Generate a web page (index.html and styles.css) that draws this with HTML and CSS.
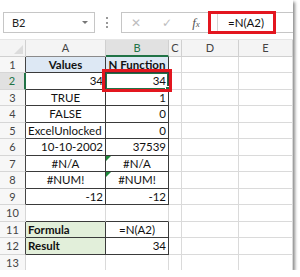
FILE: index.html
```html
<!DOCTYPE html>
<html lang="en">
<head>
  <meta charset="UTF-8">
  <title>N Function</title>
  <link rel="stylesheet" href="styles.css">
</head>
<body>
  <div class="window">
    <div class="fbar">
      <div class="namebox"><span>B2</span><span class="caret"></span></div>
      <div class="dots"></div>
      <div class="fbox">
        <span class="btn x">&#x2715;</span>
        <span class="btn ok">&#x2713;</span>
        <span class="fx"><i>f</i><small>x</small></span>
        <div class="mark"><span>=N(A2)</span></div>
      </div>
    </div>

    <div class="sheet">
      <div class="c corner"></div>
      <div class="c ch ch-t">A</div>
      <div class="c ch sel-col">B</div>
      <div class="c ch">C</div>
      <div class="c ch">D</div>
      <div class="c ch">E</div>

      <div class="c rh rh-t">1</div>
      <div class="c t head center">Values</div>
      <div class="c t head center">N Function</div>
      <div class="c"></div><div class="c"></div><div class="c"></div>

      <div class="c rh sel-row">2</div>
      <div class="c t right">34</div>
      <div class="c t right active">34</div>
      <div class="c"></div><div class="c"></div><div class="c"></div>

      <div class="c rh rh-t">3</div>
      <div class="c t center">TRUE</div>
      <div class="c t right">1</div>
      <div class="c"></div><div class="c"></div><div class="c"></div>

      <div class="c rh rh-t">4</div>
      <div class="c t center">FALSE</div>
      <div class="c t right">0</div>
      <div class="c"></div><div class="c"></div><div class="c"></div>

      <div class="c rh rh-t">5</div>
      <div class="c t">ExcelUnlocked</div>
      <div class="c t right">0</div>
      <div class="c"></div><div class="c"></div><div class="c"></div>

      <div class="c rh rh-t">6</div>
      <div class="c t right">10-10-2002</div>
      <div class="c t right">37539</div>
      <div class="c"></div><div class="c"></div><div class="c"></div>

      <div class="c rh rh-t">7</div>
      <div class="c t center">#N/A</div>
      <div class="c t center err">#N/A</div>
      <div class="c"></div><div class="c"></div><div class="c"></div>

      <div class="c rh rh-t">8</div>
      <div class="c t center">#NUM!</div>
      <div class="c t center err">#NUM!</div>
      <div class="c"></div><div class="c"></div><div class="c"></div>

      <div class="c rh rh-t">9</div>
      <div class="c t right">-12</div>
      <div class="c t right">-12</div>
      <div class="c"></div><div class="c"></div><div class="c"></div>

      <div class="c rh">10</div>
      <div class="c tb"></div>
      <div class="c tb"></div>
      <div class="c"></div><div class="c"></div><div class="c"></div>

      <div class="c rh rh-t">11</div>
      <div class="c t label">Formula</div>
      <div class="c t center">=N(A2)</div>
      <div class="c"></div><div class="c"></div><div class="c"></div>

      <div class="c rh rh-t">12</div>
      <div class="c t label">Result</div>
      <div class="c t right">34</div>
      <div class="c"></div><div class="c"></div><div class="c"></div>

      <div class="c rh last">13</div>
      <div class="c last"></div><div class="c last"></div><div class="c last"></div><div class="c last"></div><div class="c last"></div>
    </div>
  </div>
</body>
</html>
```

FILE: styles.css
```css
body {
  margin: 0;
  background: #fff;
  font-family: Lato, "Open Sans", sans-serif;
}

.window {
  width: 293px;
  height: 270px;
  background: #fff;
  box-shadow: 2px 2px 3px rgba(0, 0, 0, 0.45);
}

/* formula bar */
.fbar {
  height: 40px;
  box-sizing: border-box;
  padding-top: 12px;
  display: flex;
  align-items: flex-start;
  border-bottom: 1px solid #e6e6e6;
}

.namebox {
  margin-left: 3px;
  width: 92px;
  height: 21px;
  box-sizing: border-box;
  border: 1px solid #c6c6c6;
  display: flex;
  align-items: center;
  justify-content: space-between;
  padding: 0 6px 0 8px;
  font-size: 11px;
  color: #222;
}

.caret {
  width: 0;
  height: 0;
  border-left: 3px solid transparent;
  border-right: 3px solid transparent;
  border-top: 3px solid #777;
}

.dots {
  width: 0;
  height: 11px;
  margin: 5px 13px 0 11px;
  border-left: 2px dotted #999;
}

.fbox {
  flex: 1;
  height: 21px;
  box-sizing: border-box;
  border: 1px solid #c6c6c6;
  border-right: none;
  display: flex;
  align-items: center;
}

.btn {
  text-align: center;
  color: #bdbdbd;
  font-family: "DejaVu Sans", sans-serif;
  font-size: 12px;
}

.x { width: 28px; }
.ok { width: 34px; }

.fx {
  width: 24px;
  text-align: center;
  color: #555;
  font-family: "Liberation Serif", serif;
  font-size: 13px;
}

.fx small {
  font-size: 9px;
  font-style: italic;
}

.mark {
  height: 23px;
  width: 68px;
  margin: -1px 0;
  box-sizing: border-box;
  border: 3px solid #e3161f;
  padding-left: 6px;
  display: flex;
  align-items: stretch;
}

.mark span {
  border-left: 1px solid #d4d4d4;
  padding-left: 10px;
  font-size: 11.5px;
  line-height: 17px;
  color: #111;
}

/* sheet grid */
.sheet {
  display: grid;
  grid-template-columns: 26px 80px 63px 13px 57px 54px;
  grid-auto-rows: 16.5px;
  font-size: 11.5px;
  color: #111;
}

.c {
  box-sizing: border-box;
  height: 16.5px;
  border-right: 1px solid #dadada;
  border-bottom: 1px solid #dadada;
  padding: 0 2px;
  display: flex;
  align-items: center;
  white-space: nowrap;
  overflow: hidden;
}

.c.last { border-bottom: none; }

.corner {
  background: #f4f4f4;
  position: relative;
  border-color: #d0d0d0;
}

.corner::after {
  content: "";
  position: absolute;
  right: 2px;
  bottom: 2px;
  border-left: 9px solid transparent;
  border-bottom: 9px solid #dcdcdc;
}

.ch {
  background: #f4f4f4;
  color: #444;
  justify-content: center;
  font-size: 11px;
  border-color: #d0d0d0;
}

.ch-t { border-bottom-color: #8a8a8a; }

.sel-col {
  background: #e1e1e1;
  color: #217346;
  border-bottom: 2px solid #217346;
}

.rh {
  background: #f7f7f7;
  color: #444;
  justify-content: center;
  font-size: 11px;
  border-color: #d6d6d6;
}

.rh-t { border-right-color: #444; }

.sel-row {
  background: #e1e1e1;
  color: #217346;
  border-right: 2px solid #217346;
}

.t {
  border-right-color: #3a3a3a;
  border-bottom-color: #3a3a3a;
}

.tb { border-bottom-color: #3a3a3a; }

.right { justify-content: flex-end; }
.center { justify-content: center; }

.head {
  background: #dde8f4;
  font-weight: bold;
}

.label {
  background: #e2efda;
  font-weight: bold;
}

.active {
  position: relative;
  overflow: visible;
  box-shadow: inset 0 0 0 1px #217346;
}

.active::before {
  content: "";
  position: absolute;
  right: -3px;
  bottom: -3px;
  width: 4px;
  height: 4px;
  background: #217346;
  border: 1px solid #fff;
}

.active::after {
  content: "";
  position: absolute;
  left: -4px;
  top: -4px;
  right: -4px;
  bottom: -3px;
  border: 3px solid #e3161f;
}

.err { position: relative; }

.err::before {
  content: "";
  position: absolute;
  left: 0;
  top: 0;
  border-top: 5px solid #1e8a3c;
  border-right: 5px solid transparent;
}
```
